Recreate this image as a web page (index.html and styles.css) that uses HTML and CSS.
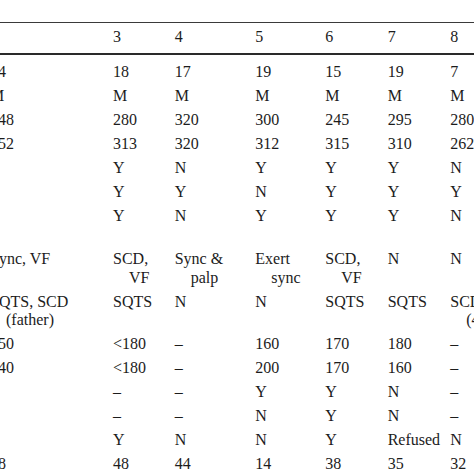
FILE: index.html
```html
<!DOCTYPE html>
<html>
<head>
<meta charset="utf-8">
<link rel="stylesheet" href="styles.css">
</head>
<body>
<div class="frame">
<table class="data">
  <colgroup>
    <col class="c2"><col class="c3"><col class="c4"><col class="c5"><col class="c6"><col class="c7"><col class="c8">
  </colgroup>
  <thead>
    <tr><th>2</th><th>3</th><th>4</th><th>5</th><th>6</th><th>7</th><th>8</th></tr>
  </thead>
  <tbody>
    <tr class="first"><td>14</td><td>18</td><td>17</td><td>19</td><td>15</td><td>19</td><td>7</td></tr>
    <tr><td>M</td><td>M</td><td>M</td><td>M</td><td>M</td><td>M</td><td>M</td></tr>
    <tr><td>348</td><td>280</td><td>320</td><td>300</td><td>245</td><td>295</td><td>280</td></tr>
    <tr><td>352</td><td>313</td><td>320</td><td>312</td><td>315</td><td>310</td><td>262</td></tr>
    <tr><td></td><td>Y</td><td>N</td><td>Y</td><td>Y</td><td>Y</td><td>N</td></tr>
    <tr><td></td><td>Y</td><td>Y</td><td>N</td><td>Y</td><td>Y</td><td>Y</td></tr>
    <tr class="tall"><td></td><td>Y</td><td>N</td><td>Y</td><td>Y</td><td>Y</td><td>N</td></tr>
    <tr><td class="hang">Sync, VF</td><td class="hang">SCD,<br>VF</td><td class="hang">Sync &amp;<br>palp</td><td class="hang">Exert<br>sync</td><td class="hang">SCD,<br>VF</td><td>N</td><td>N</td></tr>
    <tr><td class="hang">SQTS, SCD<br>(father)</td><td>SQTS</td><td>N</td><td>N</td><td>SQTS</td><td>SQTS</td><td class="hang">SCD<br>(4 relatives)</td></tr>
    <tr><td>250</td><td>&lt;180</td><td>–</td><td>160</td><td>170</td><td>180</td><td>–</td></tr>
    <tr><td>240</td><td>&lt;180</td><td>–</td><td>200</td><td>170</td><td>160</td><td>–</td></tr>
    <tr><td></td><td>–</td><td>–</td><td>Y</td><td>Y</td><td>N</td><td>–</td></tr>
    <tr><td></td><td>–</td><td>–</td><td>N</td><td>Y</td><td>N</td><td>–</td></tr>
    <tr><td></td><td>Y</td><td>N</td><td>N</td><td>Y</td><td>Refused</td><td>N</td></tr>
    <tr><td>28</td><td>48</td><td>44</td><td>14</td><td>38</td><td>35</td><td>32</td></tr>
  </tbody>
</table>
</div>
</body>
</html>
```
FILE: styles.css
```css
html, body {
  margin: 0;
  padding: 0;
  background: #ffffff;
}

.frame {
  width: 474px;
  height: 474px;
  overflow: hidden;
  padding-top: 22px;
  box-sizing: border-box;
}

.data {
  margin-left: -10px;
  border-collapse: separate;
  border-spacing: 0;
  table-layout: fixed;
  width: 590px;
  font-family: "Liberation Serif", "Times New Roman", serif;
  font-size: 16px;
  line-height: 18.8px;
  color: #1c1c1c;
}

.c2 { width: 123px; }
.c3 { width: 61.7px; }
.c4 { width: 80.6px; }
.c5 { width: 70px; }
.c6 { width: 62.4px; }
.c7 { width: 62.6px; }
.c8 { width: 129.7px; }

.data th {
  font-weight: normal;
  text-align: left;
  vertical-align: top;
  padding: 5px 0 6px 0;
  border-top: 1px solid #3a3a3a;
  border-bottom: 2px solid #2a2a2a;
  white-space: nowrap;
}

.data td {
  text-align: left;
  vertical-align: top;
  padding: 2.6px 0;
  white-space: nowrap;
}

.data tr.first td {
  padding-top: 8.3px;
}

.data tr.tall td {
  padding-bottom: 21.4px;
}

.data td.hang {
  padding-left: 16px;
  text-indent: -16px;
}
```
